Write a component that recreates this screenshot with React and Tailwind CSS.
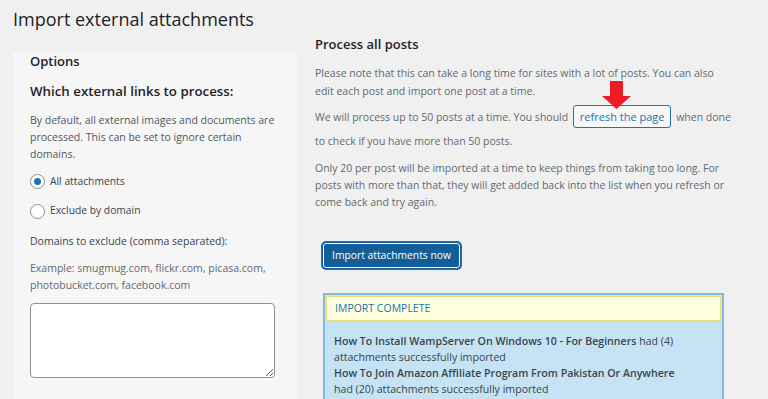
import React from 'react';

const font = { fontFamily: '"Open Sans", "Noto Sans", sans-serif' };

function Radio({ checked, label }) {
    return (
        <label className="flex items-center gap-[5px] text-[10.3px] text-[#3c434a]">
            <span className="w-[15px] h-[15px] rounded-full border border-[#8c8f94] bg-white flex items-center justify-center">
                {checked && <span className="w-[7px] h-[7px] rounded-full bg-[#2271b1]" />}
            </span>
            {label}
        </label>
    );
}

export default function App() {
    return (
        <div className="w-[768px] h-[399px] overflow-hidden bg-[#f0f0f1]" style={font}>
            <h1 className="text-[18px] text-[#1d2327] pl-[13px] pt-[4px] h-[30px] leading-[30px]">Import external attachments</h1>

            <div className="flex items-start">
                {/* Options panel */}
                <div className="ml-[13px] mt-[22px] w-[284px] h-[400px] bg-[#f6f6f6] pl-[17px] pr-[22px]">
                    <h2 className="text-[13px] font-semibold text-[#1d2327] leading-[18px]">Options</h2>
                    <h3 className="text-[13.3px] font-semibold text-[#1d2327] mt-[11px] leading-[20px]">Which external links to process:</h3>
                    <p className="text-[10.5px] text-[#50575e] leading-[17px] mt-[11px]">
                        By default, all external images and documents are<br />processed. This can be set to ignore certain<br />domains.
                    </p>
                    <div className="mt-[11px] flex flex-col gap-[14px]">
                        <Radio checked label="All attachments" />
                        <Radio label="Exclude by domain" />
                    </div>
                    <p className="text-[10.5px] text-[#3c434a] mt-[14px] leading-[17px]">Domains to exclude (comma separated):</p>
                    <p className="text-[10.5px] text-[#646970] leading-[17px] mt-[10px]">
                        Example: smugmug.com, flickr.com, picasa.com,<br />photobucket.com, facebook.com
                    </p>
                    <textarea className="mt-[9px] w-[245px] h-[75px] border border-[#8c8f94] rounded-[4px] bg-white block" />
                </div>

                {/* Process column */}
                <div className="ml-[18px] w-[440px]">
                    <h2 className="text-[13px] font-semibold text-[#1d2327] mt-[5px] leading-[18px]">Process all posts</h2>
                    <p className="text-[10.5px] text-[#646970] leading-[18px] mt-[11px]">
                        Please note that this can take a long time for sites with a lot of posts. You can also<br />edit each post and import one post at a time.
                    </p>
                    <div className="text-[10.5px] text-[#646970] leading-[24px] mt-[5px]">
                        <div className="flex items-center whitespace-nowrap">
                            <span>We will process up to 50 posts at a time. You should</span>
                            <span className="relative ml-[5px] mr-[5px]">
                                <span className="inline-flex items-center justify-center w-[98px] h-[23px] border border-[#2271b1] rounded-[3px] bg-[#f6f7f7] text-[#2271b1] text-[11px] leading-none">refresh the page</span>
                                <svg className="absolute left-[29px] -top-[24px]" width="29" height="28" viewBox="0 0 29 28">
                                    <path d="M8 0 H21 V15 H29 L14.5 28 L0 15 H8 Z" fill="#ed1c24" />
                                </svg>
                            </span>
                            <span>when done</span>
                        </div>
                        <div>to check if you have more than 50 posts.</div>
                    </div>
                    <p className="text-[10.5px] text-[#646970] leading-[17px] mt-[7px]">
                        Only 20 per post will be imported at a time to keep things from taking too long. For<br />posts with more than that, they will get added back into the list when you refresh or<br />come back and try again.
                    </p>
                    <button className="mt-[31px] ml-[7px] h-[27px] w-[139px] rounded-[4px] bg-[#135e96] text-white text-[10.3px] border border-[#135e96] shadow-[inset_0_0_0_1px_#ffffff,0_0_0_1px_#2271b1] block">
                        Import attachments now
                    </button>
                    <div className="mt-[24px] ml-[8px] w-[401px] h-[130px] bg-[#c5e3f5] border-2 border-[#7dbde2] pt-[1px] px-[1px]">
                        <div className="h-[25px] bg-[#ffffdd] border border-[#e8dc7f] flex items-center pl-[8px] text-[10.5px] text-[#2271b1] uppercase">
                            Import complete
                        </div>
                        <div className="px-[8px] pt-[12px] text-[10.6px] text-[#3c434a] leading-[16px]">
                            <p><b className="font-semibold">How To Install WampServer On Windows 10 - For Beginners</b> had (4)<br />attachments successfully imported</p>
                            <p><b className="font-semibold">How To Join Amazon Affiliate Program From Pakistan Or Anywhere</b><br />had (20) attachments successfully imported</p>
                        </div>
                    </div>
                </div>
            </div>
        </div>
    );
}
